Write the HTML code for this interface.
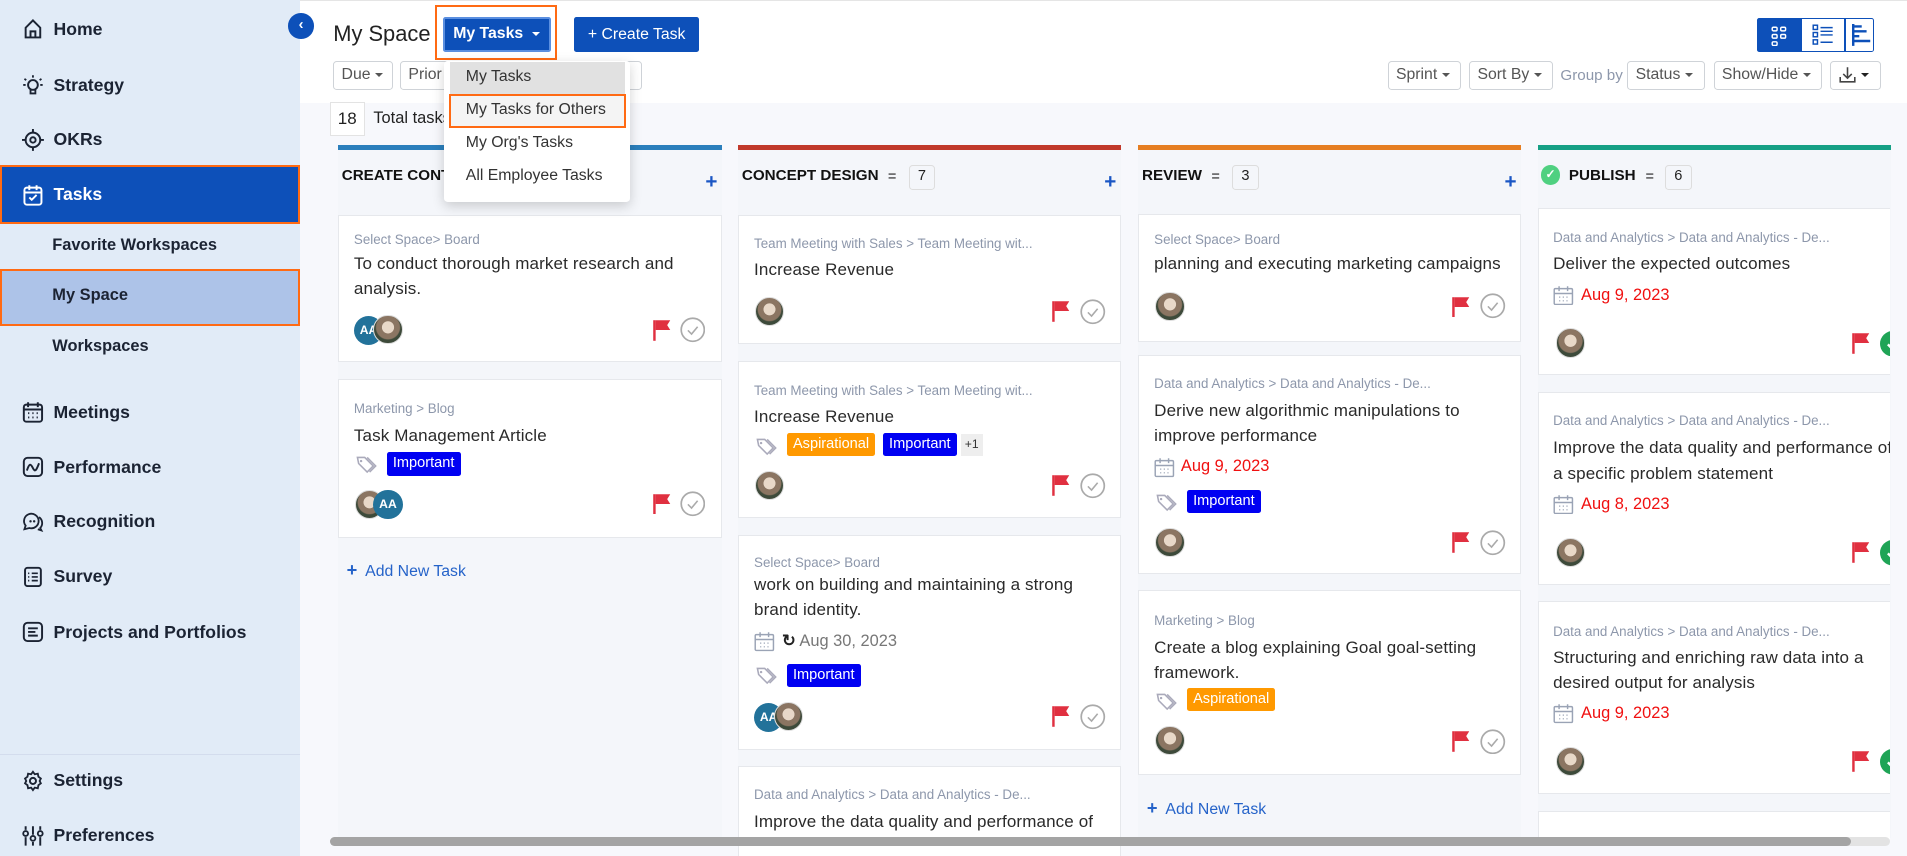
<!DOCTYPE html>
<html><head><meta charset="utf-8">
<style>
*{box-sizing:border-box;margin:0;padding:0}
html,body{width:1907px;height:856px;overflow:hidden;background:#f7f8fc}
#w{zoom:1.21620;width:1568px;height:704px;position:relative;font-family:"Liberation Sans",sans-serif;color:#222;overflow:hidden}
.a{position:absolute;white-space:nowrap}
.sb{position:absolute;left:0;top:0;width:247px;height:704px;background:#e1ebf7}
.ni{position:absolute;left:18px;font-size:14.5px;font-weight:bold;color:#1b2333;display:flex;align-items:center;gap:8px}
.ni svg{width:18px;height:18px}
.btn{position:absolute;border:1px solid #cfd3d8;border-radius:3px;background:#fff;font-size:13px;color:#555;height:24px;line-height:22px;padding:0 6px}
.car{display:inline-block;border-left:3.5px solid transparent;border-right:3.5px solid transparent;border-top:4px solid #555;vertical-align:middle;margin-left:4px}
.col{position:absolute;top:119px;height:570px;background:#f4f6fa}
.bar{position:absolute;left:0;top:0;height:4px;width:100%}
.ch{position:absolute;top:137px;font-size:12.5px;font-weight:bold;color:#111}
.cnt{position:absolute;top:136px;width:22px;height:20px;border:1px solid #ddd;border-radius:3px;font-size:12px;text-align:center;line-height:18px;background:#f4f6fa}
.plus{position:absolute;top:140px;color:#1a56c4;font-size:17px;font-weight:bold}
.card{position:absolute;background:#fff;border:1px solid #e6e8ec}
.bc{position:absolute;font-size:11px;color:#8d97ab;white-space:nowrap}
.tt{position:absolute;font-size:14px;color:#2a2a2a;line-height:21px;letter-spacing:.1px;white-space:nowrap}
.av{position:absolute;width:24px;height:24px;border-radius:50%;background:radial-gradient(circle at 50% 42%,#e8d8c8 0 28%,#8b7562 30% 55%,#3d4a3a 60%);border:1px solid #ddd}
.aa{position:absolute;width:24px;height:24px;border-radius:50%;background:#22729a;color:#fff;font-size:10px;font-weight:bold;text-align:center;line-height:24px}
.fl{position:absolute;width:16px;height:18px}
.ck{position:absolute;width:21px;height:21px}
.gk{position:absolute;width:21px;height:21px}
.tag{position:absolute;height:19px;line-height:19px;font-size:12px;color:#fff;padding:0 5px;border-radius:2px}
.imp{background:#0000f2}.asp{background:#ff9900}
.ti{position:absolute;width:20px;height:16px}
.dt{position:absolute;font-size:13.5px;color:#f01010}
.cal{position:absolute;width:17px;height:17px}
.add{position:absolute;font-size:13px;color:#2563c9}
</style></head><body><div id="w">
<svg width="0" height="0" style="position:absolute"><defs>
<symbol id="flag" viewBox="0 0 16 18"><rect x="1" y="1" width="2" height="17" fill="#e03040"/><path d="M3 1H15L12.5 5L15 9H3Z" fill="#e03040"/></symbol>
<symbol id="tag" viewBox="0 0 20 16"><path d="M2 2h6l7 7-5 5-7-7z" fill="none" stroke="#aab" stroke-width="1.3"/><circle cx="5" cy="5" r="1" fill="#aab"/><path d="M10 2l7 7-5 5" fill="none" stroke="#aab" stroke-width="1.3"/></symbol>
<symbol id="cal" viewBox="0 0 17 17"><rect x="1" y="3" width="15" height="13" rx="1" fill="none" stroke="#9aa3b5" stroke-width="1.2"/><path d="M1 7h15M5 1v4M12 1v4" stroke="#9aa3b5" stroke-width="1.2"/><path d="M5 10h1M8 10h1M11 10h1M5 13h1M8 13h1M11 13h1" stroke="#9aa3b5"/></symbol>
<symbol id="chk" viewBox="0 0 21 21"><circle cx="10.5" cy="10.5" r="9.5" fill="none" stroke="#aaa" stroke-width="1.4"/><path d="M6.5 11l3 3 5-6" fill="none" stroke="#aaa" stroke-width="1.3"/></symbol>
<symbol id="gchk" viewBox="0 0 21 21"><circle cx="10.5" cy="10.5" r="10.5" fill="#1fa456"/><path d="M6.5 11l3 3 5-6" fill="none" stroke="#fff" stroke-width="2"/></symbol>
</defs></svg>

<div class="sb"></div>
<div style="position:absolute;left:0;top:620px;width:247px;height:1px;background:#d3dced"></div>
<div class="ni" style="top:15px"><svg viewBox="0 0 18 18"><path d="M3 16V8L9 2l6 6v8zM7 16v-5h4v5" fill="none" stroke="#1b2333" stroke-width="1.6"/></svg>Home</div>
<div class="ni" style="top:61px"><svg viewBox="0 0 18 18"><circle cx="9" cy="9" r="4" fill="none" stroke="#1b2333" stroke-width="1.6"/><path d="M7 13v3h4v-3M9 1v2M2 4l1.5 1M16 4l-1.5 1M1 9h2M15 9h2" stroke="#1b2333" stroke-width="1.5" fill="none"/></svg>Strategy</div>
<div class="ni" style="top:106px"><svg viewBox="0 0 18 18"><circle cx="9" cy="9" r="6" fill="none" stroke="#1b2333" stroke-width="1.6"/><circle cx="9" cy="9" r="2.2" fill="none" stroke="#1b2333" stroke-width="1.6"/><path d="M9 0v3M9 15v3M0 9h3M15 9h3" stroke="#1b2333" stroke-width="1.6"/></svg>OKRs</div>
<div style="position:absolute;left:0;top:136px;width:247px;height:48px;background:#0d50b9;border:2px solid #ff6a13"></div>
<div class="ni" style="top:151px;color:#fff"><svg viewBox="0 0 18 18"><rect x="2" y="3" width="14" height="14" rx="2" fill="none" stroke="#fff" stroke-width="1.6"/><path d="M2 7h14M6 1v4M12 1v4M6 11l2 2 4-4" stroke="#fff" stroke-width="1.6" fill="none"/></svg>Tasks</div>
<div class="ni" style="top:194px;left:43px;font-size:13.5px">Favorite Workspaces</div>
<div style="position:absolute;left:0;top:221px;width:247px;height:47px;background:#adc3e8;border:2px solid #ff6a13"></div>
<div class="ni" style="top:235px;left:43px;font-size:13.5px">My Space</div>
<div class="ni" style="top:277px;left:43px;font-size:13.5px">Workspaces</div>
<div class="ni" style="top:330px"><svg viewBox="0 0 18 18"><rect x="1.5" y="3" width="15" height="14" rx="2" fill="none" stroke="#1b2333" stroke-width="1.6"/><path d="M1.5 7h15M5 1v4M13 1v4" stroke="#1b2333" stroke-width="1.6"/><path d="M5 10h1M8.5 10h1M12 10h1M5 13.5h1M8.5 13.5h1M12 13.5h1" stroke="#1b2333" stroke-width="1.6"/></svg>Meetings</div>
<div class="ni" style="top:375px"><svg viewBox="0 0 18 18"><rect x="1.5" y="1.5" width="15" height="15" rx="3" fill="none" stroke="#1b2333" stroke-width="1.6"/><path d="M4 12c2-6 3-6 5-2s3 1 5-4" fill="none" stroke="#1b2333" stroke-width="1.6"/></svg>Performance</div>
<div class="ni" style="top:420px"><svg viewBox="0 0 18 18"><path d="M2 15l1-3a6 6 0 1 1 3 2z" fill="none" stroke="#1b2333" stroke-width="1.5"/><circle cx="7" cy="8.5" r="1" fill="#1b2333"/><circle cx="10" cy="8.5" r="1" fill="#1b2333"/><path d="M14 5a6 6 0 0 1 1 9l1 2-3-1" fill="none" stroke="#1b2333" stroke-width="1.5"/></svg>Recognition</div>
<div class="ni" style="top:465px"><svg viewBox="0 0 18 18"><rect x="2.5" y="1.5" width="13" height="15" rx="2" fill="none" stroke="#1b2333" stroke-width="1.6"/><path d="M5 6h1M8 6h5M5 9h1M8 9h5M5 12h1M8 12h5" stroke="#1b2333" stroke-width="1.4"/></svg>Survey</div>
<div class="ni" style="top:511px"><svg viewBox="0 0 18 18"><rect x="1.5" y="1.5" width="15" height="15" rx="3" fill="none" stroke="#1b2333" stroke-width="1.6"/><path d="M5 6h8M5 9h6M5 12h8" stroke="#1b2333" stroke-width="1.6"/></svg>Projects and Portfolios</div>
<div class="ni" style="top:633px"><svg viewBox="0 0 18 18"><circle cx="9" cy="9" r="2.5" fill="none" stroke="#1b2333" stroke-width="1.6"/><path d="M9 1.5l1.5 2 2.5-.5.5 2.5 2 1.5-1 2 1 2-2 1.5-.5 2.5-2.5-.5L9 16.5l-1.5-2-2.5.5-.5-2.5-2-1.5 1-2-1-2 2-1.5.5-2.5 2.5.5z" fill="none" stroke="#1b2333" stroke-width="1.5"/></svg>Settings</div>
<div class="ni" style="top:678px"><svg viewBox="0 0 18 18"><path d="M3 1v3M3 10v7M9 1v7M9 14v3M15 1v3M15 10v7" stroke="#1b2333" stroke-width="1.6"/><circle cx="3" cy="7" r="2" fill="none" stroke="#1b2333" stroke-width="1.5"/><circle cx="9" cy="11" r="2" fill="none" stroke="#1b2333" stroke-width="1.5"/><circle cx="15" cy="7" r="2" fill="none" stroke="#1b2333" stroke-width="1.5"/></svg>Preferences</div>

<!-- header -->
<div style="position:absolute;left:247px;top:0;width:1321px;height:85px;background:#fff;border-top:1px solid #e5e5e5"></div>
<div style="position:absolute;left:237px;top:11px;width:21px;height:21px;border-radius:50%;background:#0d50b9;color:#fff;font-size:12px;font-weight:bold;text-align:center;line-height:20px">‹</div>
<div class="a" style="left:274px;top:17px;font-size:18px;color:#222">My Space</div>
<div style="position:absolute;left:358px;top:4px;width:100px;height:45px;border:2px solid #ff6a13"></div>
<div class="a" style="left:364px;top:14px;width:89px;height:29px;background:#0d50b9;border:2px solid #5b8fe0;border-radius:2px;color:#fff;font-weight:bold;font-size:13px;line-height:25px;text-align:center">My Tasks <span class="car" style="border-top-color:#fff"></span></div>
<div class="a" style="left:472px;top:14px;width:103px;height:29px;background:#0d50b9;border-radius:2px;color:#fff;font-size:13px;line-height:29px;text-align:center">+ Create Task</div>

<div class="btn" style="left:274px;top:50px;width:49px">Due<span class="car"></span></div>
<div class="btn" style="left:329px;top:50px;width:199px">Prior</div>

<div style="position:absolute;left:1445px;top:15px;width:96px;height:28px;border:1.5px solid #0d50b9;border-radius:2px;background:#fff"></div>
<div style="position:absolute;left:1445px;top:15px;width:37px;height:28px;background:#0d50b9;border-radius:2px 0 0 2px"></div>
<div style="position:absolute;left:1516px;top:15px;width:1.5px;height:28px;background:#0d50b9"></div>
<svg class="a" style="left:1456px;top:21px" width="14" height="17" viewBox="0 0 14 17"><g fill="none" stroke="#fff" stroke-width="1.2"><rect x="1" y="1" width="4" height="3" rx="1"/><rect x="8" y="1" width="4" height="3" rx="1"/><rect x="1" y="7" width="4" height="3" rx="1"/><rect x="8" y="7" width="4" height="3" rx="1"/><rect x="1" y="13" width="4" height="3" rx="1"/></g></svg>
<svg class="a" style="left:1490px;top:20px" width="18" height="18" viewBox="0 0 18 18"><g fill="none" stroke="#0d50b9" stroke-width="1.2"><rect x="1" y="1" width="3.5" height="3.5"/><rect x="1" y="7" width="3.5" height="3.5"/><rect x="1" y="13" width="3.5" height="3.5"/><path d="M7 3h10M7 6h10M7 9h10M7 15h10"/></g></svg>
<svg class="a" style="left:1523px;top:20px" width="16" height="18" viewBox="0 0 16 18"><path d="M1 0v18M1 2h7M1 6h11M1 10h5M1 14h14" stroke="#0d50b9" stroke-width="2" fill="none"/></svg>

<div class="btn" style="left:1141px;top:50px;width:60px">Sprint<span class="car"></span></div>
<div class="btn" style="left:1208px;top:50px;width:69px">Sort By<span class="car"></span></div>
<div class="a" style="left:1283px;top:55px;font-size:12.5px;color:#8d97ab">Group by</div>
<div class="btn" style="left:1338px;top:50px;width:64px">Status<span class="car"></span></div>
<div class="btn" style="left:1409px;top:50px;width:89px">Show/Hide<span class="car"></span></div>
<div class="btn" style="left:1505px;top:50px;width:42px"><svg width="14" height="14" viewBox="0 0 14 14" style="vertical-align:middle"><path d="M7 1v9M3.5 6.5L7 10l3.5-3.5M1 9v4h12V9" fill="none" stroke="#444" stroke-width="1.3"/></svg><span class="car" style="border-top-color:#222"></span></div>

<!-- total -->
<div class="a" style="left:271px;top:84px;width:29px;height:28px;background:#fff;border:1px solid #e3e3e3;font-size:14px;text-align:center;line-height:27px">18</div>
<div class="a" style="left:307px;top:90px;font-size:13.5px;color:#222">Total tasks</div>

<!-- columns -->
<div class="col" style="left:278px;width:316px"><div class="bar" style="background:#2b7fbc"></div></div>
<div class="col" style="left:607px;width:315px"><div class="bar" style="background:#c1392b"></div></div>
<div class="col" style="left:936px;width:315px"><div class="bar" style="background:#e67e22"></div></div>
<div class="col" style="left:1265px;width:290px"><div class="bar" style="background:#16a085"></div></div>

<div class="ch" style="left:281px">CREATE CONTENT</div><div class="plus" style="left:580px">+</div>
<div class="ch" style="left:610px">CONCEPT DESIGN</div><div class="a" style="left:730px;top:139px;font-size:12px">=</div><div class="cnt" style="left:747px">7</div><div class="plus" style="left:908px">+</div>
<div class="ch" style="left:939px">REVIEW</div><div class="a" style="left:996px;top:139px;font-size:12px">=</div><div class="cnt" style="left:1013px">3</div><div class="plus" style="left:1237px">+</div>
<div class="a" style="left:1267px;top:136px;width:16px;height:16px;border-radius:50%;background:#4fd080;color:#fff;font-size:10px;text-align:center;line-height:16px;font-weight:bold">✓</div>
<div class="ch" style="left:1290px">PUBLISH</div><div class="a" style="left:1353px;top:139px;font-size:12px">=</div><div class="cnt" style="left:1369px">6</div>

<!-- col1 -->
<div class="card" style="left:278px;top:177px;width:316px;height:121px"></div>
<div class="bc" style="left:291px;top:191px">Select Space&gt; Board</div>
<div class="tt" style="left:291px;top:206px">To conduct thorough market research and<br>analysis.</div>
<div class="aa" style="left:291px;top:260px">AA</div><div class="av" style="left:307px;top:259px"></div>
<svg class="fl" style="left:536px;top:262px"><use href="#flag"/></svg><svg class="ck" style="left:559px;top:261px"><use href="#chk"/></svg>

<div class="card" style="left:278px;top:312px;width:316px;height:130px"></div>
<div class="bc" style="left:291px;top:330px">Marketing &gt; Blog</div>
<div class="tt" style="left:291px;top:348px">Task Management Article</div>
<svg class="ti" style="left:292px;top:374px"><use href="#tag"/></svg><div class="tag imp" style="left:318px;top:372px">Important</div>
<div class="av" style="left:292px;top:403px"></div><div class="aa" style="left:307px;top:403px">AA</div>
<svg class="fl" style="left:536px;top:405px"><use href="#flag"/></svg><svg class="ck" style="left:559px;top:404px"><use href="#chk"/></svg>
<div class="add" style="left:285px;top:460px"><b style="font-size:15px">+</b>&nbsp; Add New Task</div>

<!-- col2 -->
<div class="card" style="left:607px;top:177px;width:315px;height:106px"></div>
<div class="bc" style="left:620px;top:194px">Team Meeting with Sales &gt; Team Meeting wit...</div>
<div class="tt" style="left:620px;top:211px">Increase Revenue</div>
<div class="av" style="left:621px;top:244px"></div>
<svg class="fl" style="left:864px;top:247px"><use href="#flag"/></svg><svg class="ck" style="left:888px;top:246px"><use href="#chk"/></svg>

<div class="card" style="left:607px;top:297px;width:315px;height:129px"></div>
<div class="bc" style="left:620px;top:315px">Team Meeting with Sales &gt; Team Meeting wit...</div>
<div class="tt" style="left:620px;top:332px">Increase Revenue</div>
<svg class="ti" style="left:621px;top:359px"><use href="#tag"/></svg>
<div class="tag asp" style="left:647px;top:356px">Aspirational</div><div class="tag imp" style="left:726px;top:356px">Important</div>
<div class="a" style="left:790px;top:357px;width:18px;height:18px;background:#eee;font-size:10px;color:#333;text-align:center;line-height:18px">+1</div>
<div class="av" style="left:621px;top:387px"></div>
<svg class="fl" style="left:864px;top:390px"><use href="#flag"/></svg><svg class="ck" style="left:888px;top:389px"><use href="#chk"/></svg>

<div class="card" style="left:607px;top:440px;width:315px;height:177px"></div>
<div class="bc" style="left:620px;top:456px">Select Space&gt; Board</div>
<div class="tt" style="left:620px;top:470px">work on building and maintaining a strong<br>brand identity.</div>
<svg class="cal" style="left:620px;top:519px"><use href="#cal"/></svg>
<div class="a" style="left:643px;top:519px;font-size:13.5px;color:#777"><b style="color:#222">↻</b> Aug 30, 2023</div>
<svg class="ti" style="left:621px;top:548px"><use href="#tag"/></svg><div class="tag imp" style="left:647px;top:546px">Important</div>
<div class="aa" style="left:620px;top:578px">AA</div><div class="av" style="left:636px;top:577px"></div>
<svg class="fl" style="left:864px;top:580px"><use href="#flag"/></svg><svg class="ck" style="left:888px;top:579px"><use href="#chk"/></svg>

<div class="card" style="left:607px;top:630px;width:315px;height:80px"></div>
<div class="bc" style="left:620px;top:647px">Data and Analytics &gt; Data and Analytics - De...</div>
<div class="tt" style="left:620px;top:665px">Improve the data quality and performance of</div>

<!-- col3 -->
<div class="card" style="left:936px;top:176px;width:315px;height:105px"></div>
<div class="bc" style="left:949px;top:191px">Select Space&gt; Board</div>
<div class="tt" style="left:949px;top:206px">planning and executing marketing campaigns</div>
<div class="av" style="left:950px;top:240px"></div>
<svg class="fl" style="left:1193px;top:243px"><use href="#flag"/></svg><svg class="ck" style="left:1217px;top:241px"><use href="#chk"/></svg>

<div class="card" style="left:936px;top:292px;width:315px;height:180px"></div>
<div class="bc" style="left:949px;top:309px">Data and Analytics &gt; Data and Analytics - De...</div>
<div class="tt" style="left:949px;top:327px">Derive new algorithmic manipulations to<br>improve performance</div>
<svg class="cal" style="left:949px;top:376px"><use href="#cal"/></svg><div class="dt" style="left:971px;top:376px">Aug 9, 2023</div>
<svg class="ti" style="left:950px;top:405px"><use href="#tag"/></svg><div class="tag imp" style="left:976px;top:403px">Important</div>
<div class="av" style="left:950px;top:434px"></div>
<svg class="fl" style="left:1193px;top:437px"><use href="#flag"/></svg><svg class="ck" style="left:1217px;top:436px"><use href="#chk"/></svg>

<div class="card" style="left:936px;top:485px;width:315px;height:152px"></div>
<div class="bc" style="left:949px;top:504px">Marketing &gt; Blog</div>
<div class="tt" style="left:949px;top:522px">Create a blog explaining Goal goal-setting<br>framework.</div>
<svg class="ti" style="left:950px;top:569px"><use href="#tag"/></svg><div class="tag asp" style="left:976px;top:566px">Aspirational</div>
<div class="av" style="left:950px;top:597px"></div>
<svg class="fl" style="left:1193px;top:600px"><use href="#flag"/></svg><svg class="ck" style="left:1217px;top:599px"><use href="#chk"/></svg>
<div class="add" style="left:943px;top:655px"><b style="font-size:15px">+</b>&nbsp; Add New Task</div>

<!-- col4 -->
<div style="position:absolute;left:1265px;top:160px;width:289px;height:530px;overflow:hidden">
<div class="card" style="left:0;top:11px;width:300px;height:137px"></div>
<div class="bc" style="left:12px;top:29px">Data and Analytics &gt; Data and Analytics - De...</div>
<div class="tt" style="left:12px;top:46px">Deliver the expected outcomes</div>
<svg class="cal" style="left:12px;top:74px"><use href="#cal"/></svg><div class="dt" style="left:35px;top:75px">Aug 9, 2023</div>
<div class="av" style="left:14px;top:110px"></div>
<svg class="fl" style="left:257px;top:113px"><use href="#flag"/></svg><svg class="gk" style="left:281px;top:112px"><use href="#gchk"/></svg>

<div class="card" style="left:0;top:162px;width:300px;height:159px"></div>
<div class="bc" style="left:12px;top:180px">Data and Analytics &gt; Data and Analytics - De...</div>
<div class="tt" style="left:12px;top:198px">Improve the data quality and performance of<br>a specific problem statement</div>
<svg class="cal" style="left:12px;top:246px"><use href="#cal"/></svg><div class="dt" style="left:35px;top:247px">Aug 8, 2023</div>
<div class="av" style="left:14px;top:282px"></div>
<svg class="fl" style="left:257px;top:285px"><use href="#flag"/></svg><svg class="gk" style="left:281px;top:284px"><use href="#gchk"/></svg>

<div class="card" style="left:0;top:334px;width:300px;height:159px"></div>
<div class="bc" style="left:12px;top:353px">Data and Analytics &gt; Data and Analytics - De...</div>
<div class="tt" style="left:12px;top:370px">Structuring and enriching raw data into a<br>desired output for analysis</div>
<svg class="cal" style="left:12px;top:418px"><use href="#cal"/></svg><div class="dt" style="left:35px;top:419px">Aug 9, 2023</div>
<div class="av" style="left:14px;top:454px"></div>
<svg class="fl" style="left:257px;top:457px"><use href="#flag"/></svg><svg class="gk" style="left:281px;top:456px"><use href="#gchk"/></svg>

<div class="card" style="left:0;top:507px;width:300px;height:60px"></div>
</div>

<!-- dropdown -->
<div style="position:absolute;left:365px;top:50px;width:153px;height:116px;background:#fff;border-radius:3px;box-shadow:0 3px 10px rgba(0,0,0,.18)"></div>
<div style="position:absolute;left:370px;top:51px;width:144px;height:26px;background:#e1e1e1"></div>
<div class="a" style="left:383px;top:56px;font-size:13px;color:#333">My Tasks</div>
<div style="position:absolute;left:369px;top:77px;width:146px;height:28px;border:2px solid #ff6a13;background:#f4f4f4"></div>
<div class="a" style="left:383px;top:83px;font-size:13px;color:#333">My Tasks for Others</div>
<div class="a" style="left:383px;top:110px;font-size:13px;color:#333">My Org's Tasks</div>
<div class="a" style="left:383px;top:137px;font-size:13px;color:#333">All Employee Tasks</div>

<!-- scrollbar -->
<div style="position:absolute;left:271px;top:688px;width:1283px;height:8px;border-radius:4px;background:#e3e3e3"></div>
<div style="position:absolute;left:271px;top:688px;width:1251px;height:8px;border-radius:4px;background:#a4a4a4"></div>
</div></body></html>
